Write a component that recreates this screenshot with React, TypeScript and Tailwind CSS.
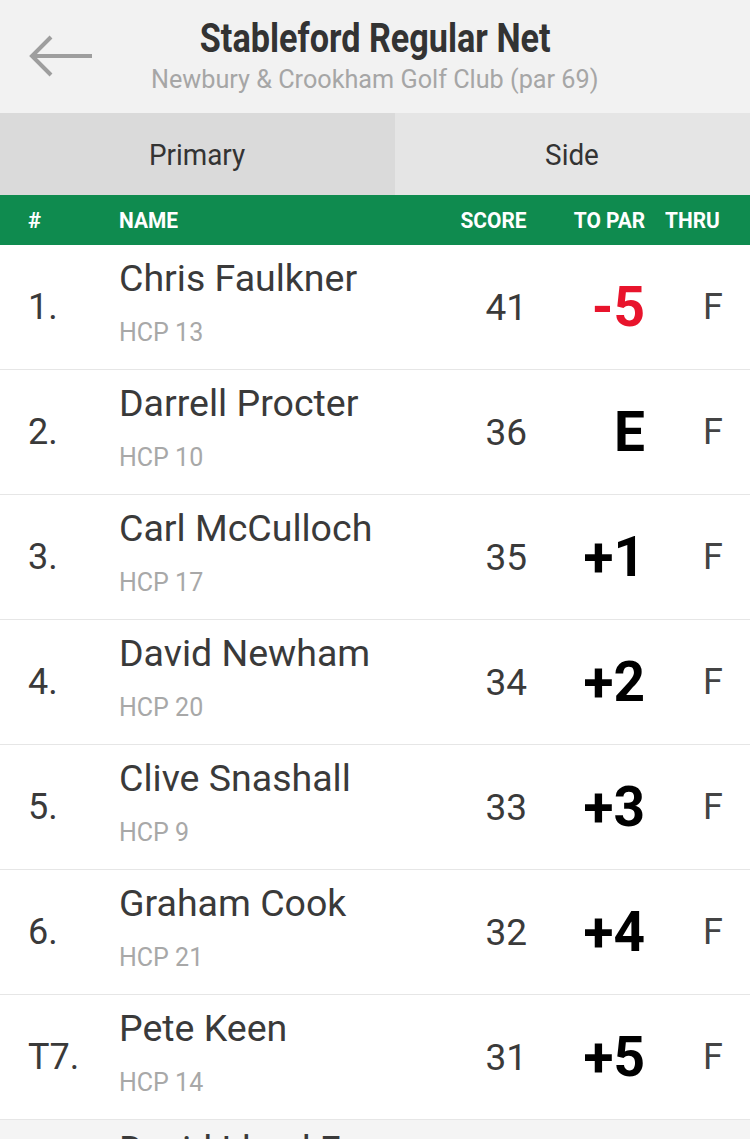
import React from "react";

const rows = [
  { rank: "1.", name: "Chris Faulkner", hcp: "HCP 13", score: "41", par: "-5", red: true },
  { rank: "2.", name: "Darrell Procter", hcp: "HCP 10", score: "36", par: "E" },
  { rank: "3.", name: "Carl McCulloch", hcp: "HCP 17", score: "35", par: "+1" },
  { rank: "4.", name: "David Newham", hcp: "HCP 20", score: "34", par: "+2" },
  { rank: "5.", name: "Clive Snashall", hcp: "HCP 9", score: "33", par: "+3" },
  { rank: "6.", name: "Graham Cook", hcp: "HCP 21", score: "32", par: "+4" },
  { rank: "T7.", name: "Pete Keen", hcp: "HCP 14", score: "31", par: "+5" },
];

export default function App() {
  return (
    <div className="w-[750px] h-[1139px] overflow-hidden bg-white font-['Roboto',sans-serif]">
      {/* Top bar */}
      <div className="relative h-[113px] bg-[#f2f2f2] flex flex-col items-center">
        <svg className="absolute left-[28px] top-[34px]" width="66" height="44" viewBox="0 0 66 44">
          <path d="M64 22H4M23 3L4 22l19 19" fill="none" stroke="#9e9e9e" strokeWidth="4" />
        </svg>
        <div className="mt-[16px] text-[40px] leading-[46px] font-bold text-[#333] scale-x-[0.855] whitespace-nowrap">
          Stableford Regular Net
        </div>
        <div className="mt-[1px] text-[26px] leading-[32px] text-[#a6a6a6] scale-x-[0.97] whitespace-nowrap">
          Newbury &amp; Crookham Golf Club (par 69)
        </div>
      </div>
      {/* Tabs */}
      <div className="flex h-[82px]">
        <div className="w-[395px] bg-[#dadada] flex items-center justify-center text-[29px] text-[#333]">
          <span className="scale-x-[0.96] inline-block mt-[4px]">Primary</span>
        </div>
        <div className="flex-1 bg-[#e5e5e5] flex items-center justify-center text-[29px] text-[#333]">
          <span className="scale-x-[0.96] inline-block mt-[4px]">Side</span>
        </div>
      </div>
      {/* Green header */}
      <div className="h-[50px] bg-[#0f8b4f] flex items-center text-white text-[22px] font-bold">
        <div className="w-[119px] pl-[28px]">#</div>
        <div className="flex-1"><span className="inline-block scale-x-[0.95] origin-left">NAME</span></div>
        <div className="w-[102px] text-right"><span className="inline-block scale-x-[0.95] origin-right">SCORE</span></div>
        <div className="w-[118px] text-right"><span className="inline-block scale-x-[0.95] origin-right">TO PAR</span></div>
        <div className="w-[105px] pl-[20px]"><span className="inline-block scale-x-[0.95] origin-left">THRU</span></div>
      </div>
      {/* Rows */}
      {rows.map((r) => (
        <div key={r.rank} className="h-[125px] border-b border-[#e6e6e6] flex items-center text-[#3a3a3a]">
          <div className="w-[119px] pl-[28px] text-[36px] leading-none">{r.rank}</div>
          <div className="flex-1 flex flex-col pb-[4px]">
            <div className="text-[37.5px] leading-[40px] whitespace-nowrap -mt-[6px]">{r.name}</div>
            <div className="mt-[21px] text-[25px] leading-[28px] text-[#a8a8a8]">{r.hcp}</div>
          </div>
          <div className="w-[102px] text-right text-[37px] leading-none">{r.score}</div>
          <div className={`w-[118px] text-right text-[55px] leading-none font-bold ${r.red ? "text-[#e8142c]" : "text-black"}`}>
            {r.par}
          </div>
          <div className="w-[105px] pl-[58px] text-[36px] leading-none text-[#444]">F</div>
        </div>
      ))}
      <div className="h-[125px] bg-[#f4f4f4] flex text-[#3a3a3a]">
        <div className="w-[119px]" />
        <div className="pt-[9px] text-[37.5px] leading-[40px] whitespace-nowrap">David Lloyd Fenn</div>
      </div>
    </div>
  );
}
